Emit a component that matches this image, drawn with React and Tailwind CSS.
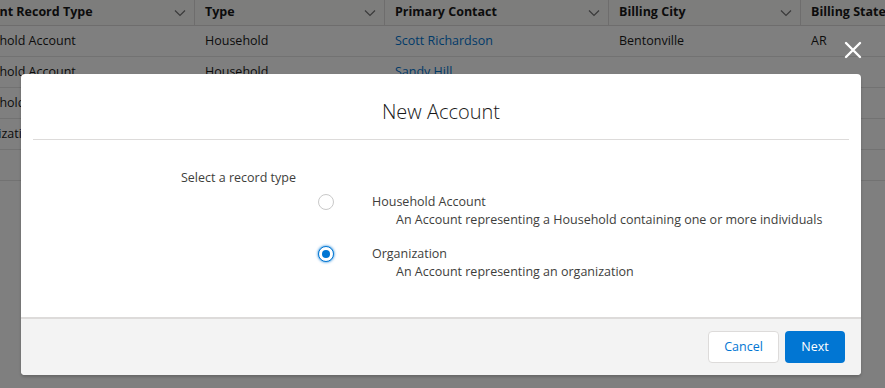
import React from "react";

const font = { fontFamily: '"Open Sans", "Noto Sans", sans-serif' };

function Chevron() {
  return (
    <svg width="12" height="8" viewBox="0 0 12 8" className="shrink-0">
      <path d="M1 1.5 L6 6.5 L11 1.5" fill="none" stroke="#747474" strokeWidth="1.2" />
    </svg>
  );
}

const cols = [
  { name: "Account Record Type", w: "w-[243px]" },
  { name: "Type", w: "w-[190px]" },
  { name: "Primary Contact", w: "w-[224px]" },
  { name: "Billing City", w: "w-[192px]" },
  { name: "Billing State/Province", w: "w-[160px]" },
];

const rows = [
  ["Household Account", "Household", "Scott Richardson", "Bentonville", "AR"],
  ["Household Account", "Household", "Sandy Hill", "", ""],
  ["Household Account", "Household", "", "", ""],
  ["Organization", "", "", "", ""],
  ["", "", "", "", ""],
];

function Radio({ checked }) {
  return checked ? (
    <div className="w-4 h-4 rounded-full border border-[#0176d3] bg-white flex items-center justify-center shadow-[0_0_3px_#0176d3] shrink-0">
      <div className="w-2 h-2 rounded-full bg-[#0176d3]" />
    </div>
  ) : (
    <div className="w-4 h-4 rounded-full border border-[#c9c9c9] bg-white shrink-0" />
  );
}

export default function App() {
  return (
    <div className="relative w-[885px] h-[388px] overflow-hidden bg-white text-[12.5px]" style={font}>
      {/* underlying table */}
      <div className="ml-[-48px] flex flex-col">
        <div className="flex h-[26px] bg-[#fafaf9] border-b border-[#dddbda]">
          {cols.map((c, i) => (
            <div
              key={i}
              className={`${c.w} shrink-0 flex items-center justify-between pl-[10px] pr-[8px] ${i < cols.length - 1 ? "border-r border-[#dddbda]" : ""}`}
            >
              <span className="font-bold text-[#181818] whitespace-nowrap">{c.name}</span>
              {i < cols.length - 1 && <Chevron />}
            </div>
          ))}
        </div>
        {rows.map((r, ri) => (
          <div key={ri} className="flex h-[31px] border-b border-[#e5e5e5] pt-[1px]">
            {r.map((cell, ci) => (
              <div key={ci} className={`${cols[ci].w} shrink-0 flex items-center pl-[10px] whitespace-nowrap`}>
                <span className={ci === 2 ? "text-[#0176d3]" : "text-[#181818]"}>{cell}</span>
              </div>
            ))}
          </div>
        ))}
      </div>

      {/* overlay */}
      <div className="absolute inset-0 bg-black/50" />

      {/* close button */}
      <button className="absolute left-[843px] top-[40px] w-5 h-5 flex items-center justify-center">
        <svg width="18" height="18" viewBox="0 0 18 18">
          <path d="M2 2 L16 16 M16 2 L2 16" stroke="#ffffff" strokeWidth="2.4" strokeLinecap="round" />
        </svg>
      </button>

      {/* modal */}
      <div className="absolute left-[21px] top-[74px] w-[840px] h-[301px] bg-white rounded-[4px] shadow-[0_2px_3px_rgba(0,0,0,0.2)] flex flex-col overflow-hidden">
        <div className="h-[66px] mx-3 border-b border-[#dddbda] flex items-center justify-center pt-[10px]">
          <h2 className="text-[20px] font-light text-[#181818] leading-none">New Account</h2>
        </div>
        <div className="flex-1 pl-[160px] pt-[29px]">
          <div className="leading-[18px] text-[#3e3e3c]">Select a record type</div>
          <div className="ml-[137px] mt-[6px] flex flex-col gap-[16px]">
            <div className="flex">
              <div className="w-[54px] pt-[1px] shrink-0">
                <Radio />
              </div>
              <div className="flex flex-col leading-[18px] text-[#3e3e3c]">
                <span>Household Account</span>
                <span className="pl-[24px]">An Account representing a Household containing one or more individuals</span>
              </div>
            </div>
            <div className="flex">
              <div className="w-[54px] pt-[1px] shrink-0">
                <Radio checked />
              </div>
              <div className="flex flex-col leading-[18px] text-[#3e3e3c]">
                <span>Organization</span>
                <span className="pl-[24px]">An Account representing an organization</span>
              </div>
            </div>
          </div>
        </div>
        <div className="h-[58px] bg-[#f3f3f3] border-t-2 border-[#dddbda] flex items-start justify-end pt-[12px] pr-[16px] gap-[6px]">
          <button className="w-[71px] h-[32px] rounded-[4px] border border-[#dddbda] bg-white text-[#0176d3]">Cancel</button>
          <button className="w-[60px] h-[32px] rounded-[4px] bg-[#0176d3] text-white">Next</button>
        </div>
      </div>
    </div>
  );
}
